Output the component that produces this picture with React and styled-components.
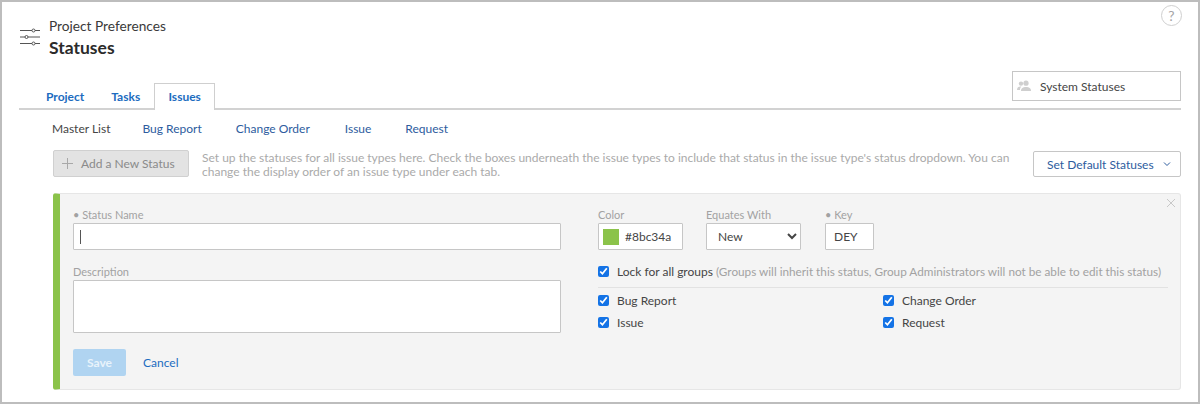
import React from 'react';
import styled, { createGlobalStyle } from 'styled-components';

const Global = createGlobalStyle`
  html, body { margin: 0; padding: 0; background: #fff; }
  * { box-sizing: border-box; }
  body { font-family: Lato, "Open Sans", "Liberation Sans", sans-serif; font-size: 12px; color: #454545; }
`;
const Frame = styled.div`
  width: 1200px; height: 404px; border: 2px solid #bdbdbd;
  padding: 0 17px; position: relative; overflow: hidden; background: #fff;
`;
const Header = styled.header`
  display: flex; align-items: flex-start; height: 69px; padding: 0 0 0 1px; gap: 9px;
`;
const HeaderIcon = styled.svg` width: 20px; height: 20px; margin-top: 25px; flex: none; `;
const Titles = styled.div` display: flex; flex-direction: column; padding-top: 15px; `;
const Sup = styled.div` font-size: 13.7px; line-height: 18px; color: #3a3a3a; `;
const Title = styled.h1` margin: 3px 0 0; font-size: 17.5px; line-height: 20px; font-weight: 700; color: #2b2b2b; `;
const Help = styled.div`
  position: absolute; top: 3px; right: 16px; width: 21px; height: 21px; border-radius: 50%;
  border: 1px solid #cfcfcf; color: #a5a5a5; font-size: 14px; line-height: 19px; text-align: center;
`;
const TabBar = styled.div`
  display: flex; justify-content: space-between; align-items: flex-end; height: 39px; border-bottom: 2px solid #d2d2d2;
`;
const Tabs = styled.nav` display: flex; padding-left: 10px; align-items: flex-end; margin-bottom: -2px; `;
const Tab = styled.a`
  display: block; height: 26px; line-height: 25px; font-size: 12px; font-weight: 700; color: #1c6cc0;
  padding: 0 ${p => p.$right}px 0 ${p => p.$left}px;
  ${p => p.$active ? 'background:#fff;border:1px solid #cfcfcf;border-bottom:none;height:27px;width:61px;text-align:center;' : ''}
`;
const SystemBox = styled.div`
  width: 169px; height: 30px; border: 1px solid #c6c6c6; display: flex; align-items: center; gap: 9px;
  padding-left: 4px; font-size: 12px; color: #454545; margin-bottom: 7px;
`;
const SubNav = styled.nav` display: flex; align-items: center; height: 37px; padding-left: 33px; font-size: 12px; `;
const SubLink = styled.a`
  color: ${p => p.$current ? '#454545' : '#2d5c9e'}; margin-right: ${p => p.$gap}px; white-space: nowrap;
`;
const ActionRow = styled.div` display: flex; align-items: flex-start; padding-left: 34px; height: 43px; margin-top: 3px; `;
const AddButton = styled.button`
  width: 136px; height: 27px; flex: none; border: 1px solid #d0d0d0; border-radius: 2px; background: #e3e3e3; color: #8a8a8a;
  font: 12px Lato, sans-serif; display: flex; align-items: center; padding: 0 0 0 8px; gap: 8px;
`;
const Hint = styled.p`
  margin: 0 0 0 13px; width: 820px; font-size: 12px; line-height: 14px; color: #aaa; flex: none; padding-top: 1px;
`;
const DefaultButton = styled.button`
  margin-left: 11px; width: 148px; height: 26px; margin-top: 1px; flex: none; background: #fff; border: 1px solid #c6c6c6; border-radius: 2px;
  color: #2d5c9e; font: 12px Lato, sans-serif; display: flex; align-items: center; gap: 9px; padding: 0 0 0 13px;
`;
const Panel = styled.section`
  margin: 0 0 0 34px; width: 1128px; height: 197px; background: #f4f4f4; border: 1px solid #e6e6e6; border-left: 7px solid #8bc34a;
  border-radius: 3px; display: flex; padding: 14px 0 0 13px; position: relative;
`;
const Close = styled.svg` position: absolute; top: 4px; right: 4px; width: 10px; height: 10px; `;
const LeftCol = styled.div` width: 488px; flex: none; `;
const RightCol = styled.div` width: 570px; flex: none; margin-left: 37px; `;
const Label = styled.label` display: block; font-size: 11px; line-height: 14px; color: #a2a2a2; height: 15px; `;
const InputWrap = styled.div` position: relative; `;
const NameInput = styled.input`
  display: block; width: 488px; height: 27px; border: 1px solid #c6c6c6; background: #fff; border-radius: 1px; padding: 0; outline: none;
`;
const Caret = styled.span` position: absolute; left: 7px; top: 7px; width: 1px; height: 14px; background: #555; `;
const DescArea = styled.textarea`
  display: block; width: 488px; height: 53px; border: 1px solid #c6c6c6; background: #fff; border-radius: 1px; resize: none; outline: none;
`;
const FieldGap = styled.div` height: 15px; `;
const Actions = styled.div` display: flex; align-items: center; margin-top: 16px; gap: 17px; `;
const Save = styled.button`
  width: 53px; height: 27px; border: none; border-radius: 2px; background: #b0d4f1; color: #e8f3fb; font: 700 12px Lato, sans-serif;
`;
const Cancel = styled.a` color: #1c6cc0; font-size: 12px; `;
const TopFields = styled.div` display: flex; `;
const Field = styled.div` display: flex; flex-direction: column; margin-right: ${p => p.$gap}px; `;
const ColorBox = styled.div`
  width: 85px; height: 27px; background: #fff; border: 1px solid #c6c6c6; border-radius: 1px; display: flex; align-items: center; padding-left: 4px; gap: 6px; font-size: 12px;
`;
const Swatch = styled.span` width: 16px; height: 16px; background: #8bc34a; flex: none; `;
const Select = styled.select`
  width: 95px; height: 27px; border: 1px solid #c6c6c6; background: #fff; border-radius: 1px; font: 12px Lato, sans-serif; color: #454545; padding-left: 7px; outline: none;
`;
const KeyInput = styled.input`
  width: 49px; height: 27px; border: 1px solid #c6c6c6; background: #fff; border-radius: 1px; font: 12px Lato, sans-serif; color: #454545; padding: 0 0 0 8px; outline: none;
`;
const CheckRow = styled.label`
  display: flex; align-items: center; gap: 8px; height: 21px; font-size: 12px; color: #454545; white-space: nowrap;
`;
const Check = styled.input.attrs({ type: 'checkbox', defaultChecked: true })`
  margin: 0; width: 11px; height: 11px; accent-color: #1473e6; flex: none;
`;
const Muted = styled.span` color: #a2a2a2; font-size: 11.76px; `;
const LockWrap = styled.div` margin-top: 11px; padding-bottom: 5px; border-bottom: 1px solid #e2e2e2; `;
const Types = styled.div` display: grid; grid-template-columns: 285px 1fr; grid-auto-rows: 21.5px; margin-top: 2px; `;

const Person = () => (
  <svg width="14" height="12" viewBox="0 0 14 12" fill="#cfcfcf">
    <circle cx="9" cy="3.2" r="2.6" /><path d="M4 11c0-3 2-4 5-4s5 1 5 4z" />
    <circle cx="4" cy="3.6" r="2.2" /><path d="M0 10c0-2.5 1.4-3.6 3.4-3.6.4 0 .8 0 1 .2C3.4 7.4 3 8.6 3 10z" />
  </svg>
);

export default function App() {
  return (
    <>
      <Global />
      <Frame>
        <Help>?</Help>
        <Header>
          <HeaderIcon viewBox="0 0 20 20" fill="none" stroke="#555" strokeWidth="1">
            <path d="M0 3.5h12M15 3.5h5M0 10h5M8 10h12M0 16.5h12M15 16.5h5" />
            <circle cx="13.5" cy="3.5" r="1.5" /><circle cx="6.5" cy="10" r="1.5" /><circle cx="13.5" cy="16.5" r="1.5" />
          </HeaderIcon>
          <Titles>
            <Sup>Project Preferences</Sup>
            <Title>Statuses</Title>
          </Titles>
        </Header>
        <TabBar>
          <Tabs>
            <Tab $left={17} $right={13}>Project</Tab>
            <Tab $left={14} $right={14}>Tasks</Tab>
            <Tab $active $left={0} $right={0}>Issues</Tab>
          </Tabs>
          <SystemBox><Person />System Statuses</SystemBox>
        </TabBar>
        <SubNav>
          <SubLink $current $gap={32}>Master List</SubLink>
          <SubLink $gap={34}>Bug Report</SubLink>
          <SubLink $gap={35}>Change Order</SubLink>
          <SubLink $gap={34}>Issue</SubLink>
          <SubLink $gap={0}>Request</SubLink>
        </SubNav>
        <ActionRow>
          <AddButton>
            <svg width="11" height="11" viewBox="0 0 11 11" stroke="#a8a8a8" strokeWidth="1"><path d="M5.5 0v11M0 5.5h11" /></svg>
            Add a New Status
          </AddButton>
          <Hint>Set up the statuses for all issue types here. Check the boxes underneath the issue types to include that status in the issue type's status dropdown. You can change the display order of an issue type under each tab.</Hint>
          <DefaultButton>
            Set Default Statuses
            <svg width="8" height="6" viewBox="0 0 8 6" fill="none" stroke="#2d5c9e" strokeWidth="1"><path d="M1 1.5l3 3 3-3" /></svg>
          </DefaultButton>
        </ActionRow>
        <Panel>
          <Close viewBox="0 0 10 10" stroke="#c8c8c8" strokeWidth="1"><path d="M1 1l8 8M9 1l-8 8" /></Close>
          <LeftCol>
            <Label>• Status Name</Label>
            <InputWrap>
              <NameInput readOnly />
              <Caret />
            </InputWrap>
            <FieldGap />
            <Label>Description</Label>
            <DescArea readOnly />
            <Actions>
              <Save>Save</Save>
              <Cancel>Cancel</Cancel>
            </Actions>
          </LeftCol>
          <RightCol>
            <TopFields>
              <Field $gap={23}>
                <Label>Color</Label>
                <ColorBox><Swatch />#8bc34a</ColorBox>
              </Field>
              <Field $gap={24}>
                <Label>Equates With</Label>
                <Select defaultValue="New"><option>New</option></Select>
              </Field>
              <Field $gap={0}>
                <Label>• Key</Label>
                <KeyInput readOnly value="DEY" />
              </Field>
            </TopFields>
            <LockWrap>
              <CheckRow><Check /><span>Lock for all groups <Muted>(Groups will inherit this status, Group Administrators will not be able to edit this status)</Muted></span></CheckRow>
            </LockWrap>
            <Types>
              <CheckRow><Check />Bug Report</CheckRow>
              <CheckRow><Check />Change Order</CheckRow>
              <CheckRow><Check />Issue</CheckRow>
              <CheckRow><Check />Request</CheckRow>
            </Types>
          </RightCol>
        </Panel>
      </Frame>
    </>
  );
}
